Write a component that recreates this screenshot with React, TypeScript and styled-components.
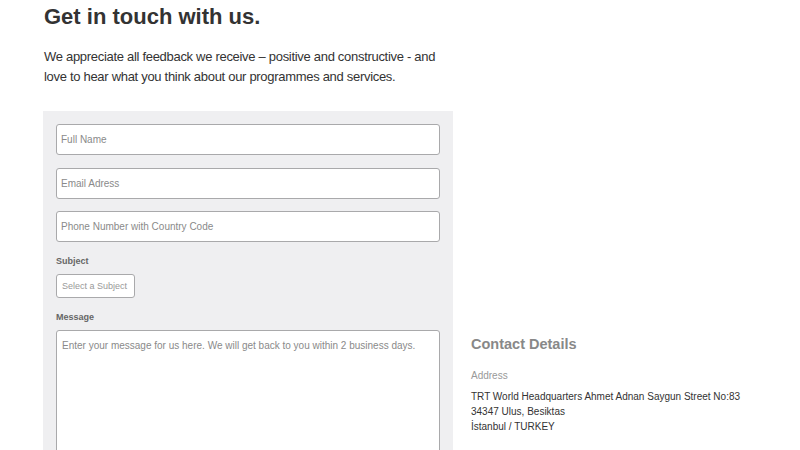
import styled, { createGlobalStyle } from 'styled-components';

const GlobalStyle = createGlobalStyle`
  html, body {
    margin: 0;
    padding: 0;
    background: #fff;
    font-family: "Liberation Sans", Arial, sans-serif;
    color: #333;
  }
`;

const Page = styled.div`
  display: flex;
  align-items: flex-start;
  gap: 18px;
  padding-left: 43px;
`;

const Main = styled.div`
  width: 410px;
`;

const Title = styled.h1`
  margin: 0;
  padding: 3px 0 0 1px;
  font-size: 22px;
  line-height: 28px;
  font-weight: 700;
  color: #333;
`;

const Intro = styled.p`
  width: 410px;
  margin: 16px 0 24px 1px;
  font-size: 13px;
  letter-spacing: -0.3px;
  line-height: 20px;
  color: #333;
`;

const Panel = styled.form`
  display: flex;
  flex-direction: column;
  align-items: flex-start;
  background: #efeff1;
  padding: 13px 13px 40px;
`;

const TextInput = styled.input`
  box-sizing: border-box;
  flex-shrink: 0;
  width: 384px;
  height: 31px;
  margin: 0 0 12.6px;
  padding: 0 4px;
  border: 1px solid #a9a9ab;
  border-radius: 3px;
  background: #fff;
  font-family: inherit;
  font-size: 10px;
  color: #333;
  &::placeholder { color: #8a8a8a; }
`;

const Label = styled.label`
  display: block;
  margin: 0 0 7px;
  font-size: 9px;
  font-weight: 700;
  color: #666;
  line-height: 12px;
`;

const Select = styled.select`
  box-sizing: border-box;
  flex-shrink: 0;
  width: 79px;
  height: 24px;
  margin: 0 0 13px;
  padding: 0 5px;
  border: 1px solid #a9a9ab;
  border-radius: 3px;
  background: #fff;
  font-family: inherit;
  font-size: 9px;
  color: #999;
  appearance: none;
`;

const Message = styled.textarea`
  box-sizing: border-box;
  flex-shrink: 0;
  width: 384px;
  height: 160px;
  margin: 0;
  padding: 8px 5px;
  border: 1px solid #a9a9ab;
  border-radius: 3px;
  background: #fff;
  font-family: inherit;
  font-size: 10px;
  line-height: 14px;
  resize: none;
  &::placeholder { color: #8a8a8a; }
`;

const Side = styled.aside`
  padding-top: 334px;
  width: 300px;
`;

const SideTitle = styled.h2`
  margin: 0 0 15px;
  font-size: 14.5px;
  line-height: 20px;
  font-weight: 700;
  color: #888;
`;

const SideLabel = styled.div`
  font-size: 10px;
  line-height: 14px;
  color: #999;
  margin-bottom: 6px;
`;

const Address = styled.address`
  font-style: normal;
  font-size: 10px;
  line-height: 15px;
  color: #333;
`;

const App = (): JSX.Element => (
  <>
    <GlobalStyle />
    <Page>
      <Main>
        <Title>Get in touch with us.</Title>
        <Intro>
          We appreciate all feedback we receive – positive and constructive - and
          love to hear what you think about our programmes and services.
        </Intro>
        <Panel onSubmit={(e): void => e.preventDefault()}>
          <TextInput placeholder="Full Name" />
          <TextInput placeholder="Email Adress" />
          <TextInput placeholder="Phone Number with Country Code" />
          <Label htmlFor="subject">Subject</Label>
          <Select id="subject" defaultValue="">
            <option value="" disabled>Select a Subject</option>
          </Select>
          <Label htmlFor="message">Message</Label>
          <Message
            id="message"
            placeholder="Enter your message for us here. We will get back to you within 2 business days."
          />
        </Panel>
      </Main>
      <Side>
        <SideTitle>Contact Details</SideTitle>
        <SideLabel>Address</SideLabel>
        <Address>
          TRT World Headquarters Ahmet Adnan Saygun Street No:83<br />
          34347 Ulus, Besiktas<br />
          İstanbul / TURKEY
        </Address>
      </Side>
    </Page>
  </>
);

export default App;
